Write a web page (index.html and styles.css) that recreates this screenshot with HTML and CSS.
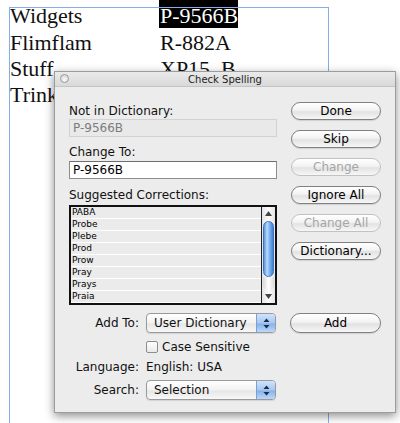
FILE: index.html
```html
<!DOCTYPE html>
<html>
<head>
<meta charset="utf-8">
<link rel="stylesheet" href="styles.css">
</head>
<body>
<div class="page">
  <div class="sheet">
    <div class="row"><div class="c1">Widgets</div><div class="c2"><span class="hl">P-9566B</span></div></div>
    <div class="row"><div class="c1">Flimflam</div><div class="c2">R-882A</div></div>
    <div class="row"><div class="c1">Stuff</div><div class="c2">XP15_B</div></div>
    <div class="row"><div class="c1">Trinkets</div><div class="c2">Q-7710C</div></div>
  </div>
  <div class="frame"></div>

  <div class="dialog">
    <div class="titlebar">
      <div class="tb-left"><span class="close"></span></div>
      <div class="title">Check Spelling</div>
      <div></div>
    </div>
    <div class="body">
      <div class="top">
        <div class="left">
          <div class="lbl">Not in Dictionary:</div>
          <div class="field disabled">P-9566B</div>
          <div class="lbl l2">Change To:</div>
          <div class="field edit">P-9566B</div>
          <div class="lbl l3">Suggested Corrections:</div>
          <div class="list">
            <div class="items">
              <div class="item">PABA</div>
              <div class="item">Probe</div>
              <div class="item">Plebe</div>
              <div class="item">Prod</div>
              <div class="item">Prow</div>
              <div class="item">Pray</div>
              <div class="item">Prays</div>
              <div class="item">Praia</div>
            </div>
            <div class="scroll">
              <div class="arrow"><svg width="7" height="5" viewBox="0 0 7 5"><polygon points="3.5,0 7,5 0,5" fill="#444"/></svg></div>
              <div class="thumb"></div>
              <div class="trackend"></div>
              <div class="spacer"></div>
              <div class="arrow"><svg width="7" height="5" viewBox="0 0 7 5"><polygon points="0,0 7,0 3.5,5" fill="#444"/></svg></div>
            </div>
          </div>
        </div>
        <div class="buttons">
          <div class="btn">Done</div>
          <div class="btn">Skip</div>
          <div class="btn off">Change</div>
          <div class="btn">Ignore All</div>
          <div class="btn off">Change All</div>
          <div class="btn">Dictionary...</div>
        </div>
      </div>
      <div class="bottom">
        <div class="flbl">Add To:</div>
        <div class="popup"><span class="ptext">User Dictionary</span><span class="stepper"><svg width="7" height="11" viewBox="0 0 7 11"><polygon points="3.5,0.5 6.5,4 0.5,4" fill="#1d2a44"/><polygon points="0.5,7 6.5,7 3.5,10.5" fill="#1d2a44"/></svg></span></div>
        <div class="btn add">Add</div>

        <div></div>
        <div class="check"><span class="box"></span><span>Case Sensitive</span></div>
        <div></div>

        <div class="flbl">Language:</div>
        <div class="val">English: USA</div>
        <div></div>

        <div class="flbl">Search:</div>
        <div class="popup"><span class="ptext">Selection</span><span class="stepper"><svg width="7" height="11" viewBox="0 0 7 11"><polygon points="3.5,0.5 6.5,4 0.5,4" fill="#1d2a44"/><polygon points="0.5,7 6.5,7 3.5,10.5" fill="#1d2a44"/></svg></span></div>
        <div></div>
      </div>
    </div>
  </div>
</div>
</body>
</html>
```

FILE: styles.css
```css
html, body {
  margin: 0;
  padding: 0;
  background: #fff;
}

.page {
  position: relative;
  width: 400px;
  height: 423px;
  overflow: hidden;
}

/* background text layout */
.sheet {
  padding: 3.4px 0 0 10px;
  font-family: "Liberation Serif", serif;
  font-size: 22px;
  line-height: 26.3px;
  color: #111;
}
.row {
  display: flex;
}
.c1 {
  width: 150px;
}
.hl {
  background: #000;
  color: #fff;
  padding: 4.4px 0 0 0;
  margin-left: -1px;
  padding-left: 1px;
}
.frame {
  position: absolute;
  left: 9px;
  top: 7px;
  width: 318px;
  height: 440px;
  border: 1px solid #86adea;
  border-bottom: none;
  pointer-events: none;
}

/* dialog window */
.dialog {
  position: absolute;
  left: 54px;
  top: 71px;
  width: 342px;
  box-sizing: border-box;
  background: #ececec;
  border: 1px solid #9c9c9c;
  box-shadow: 0 3px 9px rgba(0, 0, 0, 0.45);
  font-family: "DejaVu Sans", sans-serif;
  font-size: 12px;
  color: #111;
}
.titlebar {
  height: 15px;
  display: grid;
  grid-template-columns: 1fr auto 1fr;
  align-items: center;
  background: linear-gradient(#eaeaea, #d9d9d9);
  border-bottom: 1px solid #c4c4c4;
  box-sizing: border-box;
}
.tb-left {
  display: flex;
  align-items: center;
  padding-left: 5px;
}
.close {
  width: 9px;
  height: 9px;
  border-radius: 50%;
  box-sizing: border-box;
  border: 1px solid #9a9a9a;
  background: radial-gradient(circle at 50% 70%, #fafafa, #cfcfcf);
  margin-top: -2px;
}
.title {
  font-size: 10px;
  color: #222;
  line-height: 15px;
}

.body {
  padding: 15px 14px 12px 14px;
}
.top {
  display: grid;
  grid-template-columns: 208px 90px;
  column-gap: 14px;
}
.left {
  padding-top: 2px;
  display: flex;
  flex-direction: column;
}
.lbl {
  line-height: 15px;
  height: 15px;
  white-space: nowrap;
}
.l2 { margin-top: 8px; }
.l3 { margin-top: 9px; }

.field {
  height: 18px;
  box-sizing: border-box;
  padding: 0 3px;
  line-height: 16px;
  border: 1px solid #c9c9c9;
}
.field.disabled {
  background: #e9e9e9;
  color: #7c7c7c;
  border-color: #d2d2d2;
}
.field.edit {
  margin-top: 1px;
  background: #fff;
  border-color: #8d8d8d;
  border-top-color: #6f6f6f;
  color: #000;
}

.list {
  margin-top: 2px;
  height: 100px;
  box-sizing: border-box;
  border: 2px solid #111;
  display: flex;
  background: #fff;
}
.items {
  flex: 1;
  display: flex;
  flex-direction: column;
}
.item {
  height: 12px;
  box-sizing: border-box;
  background: #ebebeb;
  border-bottom: 1px solid #fff;
  font-size: 9px;
  line-height: 11px;
  padding-left: 1px;
  color: #000;
}
.scroll {
  width: 13px;
  border-left: 1.5px solid #222;
  display: flex;
  flex-direction: column;
  align-items: center;
  background: linear-gradient(to right, #e4e4e4, #fbfbfb 50%, #e4e4e4);
}
.arrow {
  height: 13px;
  display: flex;
  align-items: center;
  justify-content: center;
}
.thumb {
  margin-top: 1px;
  width: 11px;
  height: 57px;
  border-radius: 6px;
  box-sizing: border-box;
  border: 1px solid #3f74c4;
  background: linear-gradient(to right, #5b94df, #b9dbfb 35%, #7fb4ef 60%, #3e7fd6);
}
.trackend {
  width: 11px;
  height: 13px;
  border-radius: 0 0 6px 6px;
  background: linear-gradient(to right, #d8d8d8, #ffffff 50%, #dadada);
}
.spacer {
  flex: 1;
}

.buttons {
  display: flex;
  flex-direction: column;
  gap: 10px;
}
.btn {
  height: 18px;
  box-sizing: border-box;
  border: 1px solid #808080;
  border-radius: 9px;
  background: linear-gradient(#ffffff, #f3f3f3 45%, #e2e2e2 55%, #f7f7f7);
  text-align: center;
  line-height: 16px;
  color: #000;
  white-space: nowrap;
  box-shadow: 0 1px 1px rgba(0, 0, 0, 0.12);
}
.btn.off {
  border-color: #c2c2c2;
  color: #a6a6a6;
  box-shadow: none;
}
.btn.add {
  height: 20px;
  line-height: 18px;
  border-radius: 10px;
}

.bottom {
  margin-top: 8px;
  display: grid;
  grid-template-columns: 77px 144px 91px;
  grid-template-rows: 20px 13px 13px 20px;
  row-gap: 7px;
  align-items: center;
}
.flbl {
  text-align: right;
  padding-right: 7px;
  white-space: nowrap;
}
.val {
  white-space: nowrap;
}
.popup {
  width: 130px;
  height: 20px;
  box-sizing: border-box;
  border: 1px solid #9a9a9a;
  border-radius: 4px;
  background: linear-gradient(#ffffff, #f2f2f2 50%, #e6e6e6 55%, #f8f8f8);
  display: flex;
  align-items: stretch;
  box-shadow: 0 1px 1px rgba(0, 0, 0, 0.1);
  overflow: hidden;
}
.ptext {
  flex: 1;
  padding-left: 7px;
  line-height: 18px;
  white-space: nowrap;
}
.stepper {
  width: 18px;
  display: flex;
  align-items: center;
  justify-content: center;
  border-left: 1px solid #7e9fcf;
  background: linear-gradient(#cfe3fb, #a5c8f2 50%, #86b2eb 55%, #bcd8fa);
}
.check {
  display: flex;
  align-items: center;
  gap: 4px;
  white-space: nowrap;
}
.box {
  width: 12px;
  height: 12px;
  box-sizing: border-box;
  border: 1px solid #8d8d8d;
  border-radius: 2px;
  background: linear-gradient(#ffffff, #e9e9e9);
}
```
